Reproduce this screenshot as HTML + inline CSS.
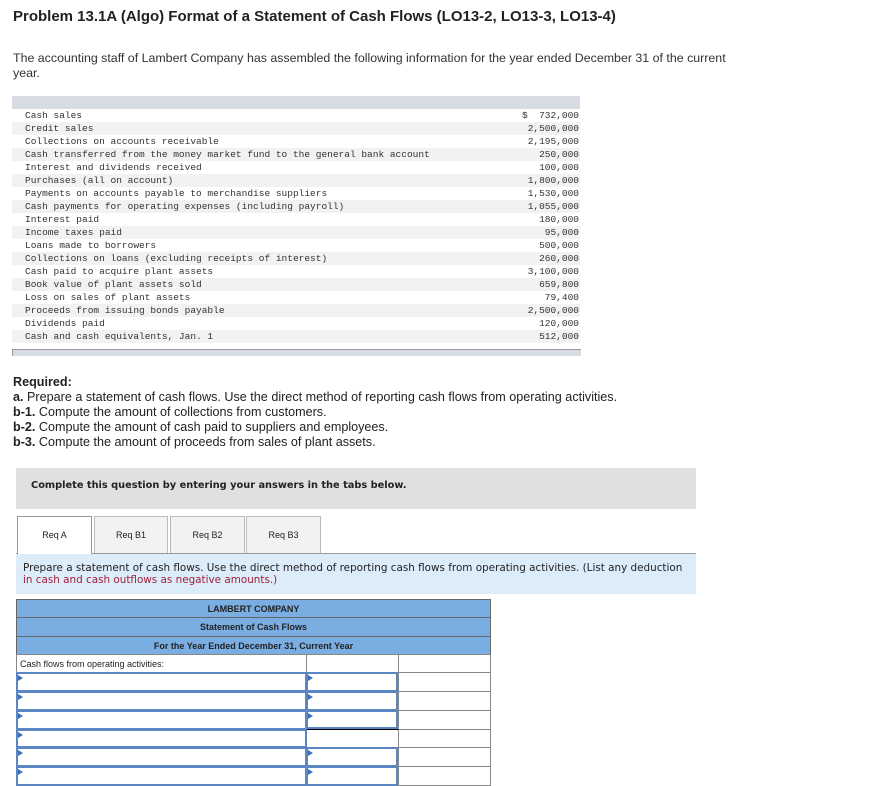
<!DOCTYPE html>
<html><head><style>
body{margin:0;width:873px;height:780px;overflow:hidden;background:#fff;font-family:"Liberation Sans",sans-serif;color:#222;position:relative}
.a{position:absolute}
.mono{font-family:"Liberation Mono","DejaVu Sans Mono",monospace;font-size:9.5px;color:#333}
.row{position:absolute;left:12px;width:568px;height:13px;line-height:14px}
.row span{position:absolute;left:13px}
.row b{position:absolute;right:1px;font-weight:normal}
.tab{position:absolute;top:516px;height:37px;border:1px solid #bbb;border-bottom:none;background:#f2f2f2;font-size:9px;text-align:center;line-height:37px;box-sizing:border-box}
.hd{position:absolute;left:16px;width:475px;background:#7aaee3;border:1px solid #666;box-sizing:border-box;font-size:9px;font-weight:bold;text-align:center;color:#222}
.c{position:absolute;border:1px solid #888;box-sizing:border-box;background:#fff}
.in{position:absolute;border:2px solid #5b86c2;box-sizing:border-box;background:#fff}
.in:before{content:"";position:absolute;left:0;top:1px;border-left:5px solid #3a6fb5;border-top:3px solid transparent;border-bottom:3px solid transparent}
</style></head><body>
<div class="a" style="left:13px;top:8px;font-size:15px;font-weight:bold;color:#222">Problem 13.1A (Algo) Format of a Statement of Cash Flows (LO13-2, LO13-3, LO13-4)</div>
<div class="a" style="left:13px;top:51px;width:735px;font-size:12.4px;line-height:15px;color:#333">The accounting staff of Lambert Company has assembled the following information for the year ended December 31 of the current year.</div>
<div class="a" style="left:12px;top:96px;width:568px;height:13px;background:#d6dbe4"></div>
<div class="mono">
<div class="row" style="top:109px"><span>Cash sales</span><b>$ &nbsp;732,000</b></div>
<div class="row" style="top:122px;background:#f2f2f2"><span>Credit sales</span><b>2,500,000</b></div>
<div class="row" style="top:135px"><span>Collections on accounts receivable</span><b>2,195,000</b></div>
<div class="row" style="top:148px;background:#f2f2f2"><span>Cash transferred from the money market fund to the general bank account</span><b>250,000</b></div>
<div class="row" style="top:161px"><span>Interest and dividends received</span><b>100,000</b></div>
<div class="row" style="top:174px;background:#f2f2f2"><span>Purchases (all on account)</span><b>1,800,000</b></div>
<div class="row" style="top:187px"><span>Payments on accounts payable to merchandise suppliers</span><b>1,530,000</b></div>
<div class="row" style="top:200px;background:#f2f2f2"><span>Cash payments for operating expenses (including payroll)</span><b>1,055,000</b></div>
<div class="row" style="top:213px"><span>Interest paid</span><b>180,000</b></div>
<div class="row" style="top:226px;background:#f2f2f2"><span>Income taxes paid</span><b>95,000</b></div>
<div class="row" style="top:239px"><span>Loans made to borrowers</span><b>500,000</b></div>
<div class="row" style="top:252px;background:#f2f2f2"><span>Collections on loans (excluding receipts of interest)</span><b>260,000</b></div>
<div class="row" style="top:265px"><span>Cash paid to acquire plant assets</span><b>3,100,000</b></div>
<div class="row" style="top:278px;background:#f2f2f2"><span>Book value of plant assets sold</span><b>659,800</b></div>
<div class="row" style="top:291px"><span>Loss on sales of plant assets</span><b>79,400</b></div>
<div class="row" style="top:304px;background:#f2f2f2"><span>Proceeds from issuing bonds payable</span><b>2,500,000</b></div>
<div class="row" style="top:317px"><span>Dividends paid</span><b>120,000</b></div>
<div class="row" style="top:330px;background:#f2f2f2"><span>Cash and cash equivalents, Jan. 1</span><b>512,000</b></div>
</div>
<div class="a" style="left:12px;top:349px;width:568px;height:6px;background:#d6dbe4;border-top:1px solid #999;border-left:1px solid #999"></div>
<div class="a" style="left:13px;top:375px;font-size:12.6px;line-height:15px;color:#222">
<b>Required:</b><br><b>a.</b> Prepare a statement of cash flows. Use the direct method of reporting cash flows from operating activities.<br><b>b-1.</b> Compute the amount of collections from customers.<br><b>b-2.</b> Compute the amount of cash paid to suppliers and employees.<br><b>b-3.</b> Compute the amount of proceeds from sales of plant assets.</div>
<div class="a" style="left:16px;top:468px;width:680px;height:41px;background:#e0e0e0"></div>
<div class="a" style="left:31px;top:480px;font-family:'DejaVu Sans',sans-serif;font-size:9.8px;font-weight:bold;color:#222">Complete this question by entering your answers in the tabs below.</div>
<div class="a" style="left:16px;top:553px;width:680px;height:1px;background:#999"></div>
<div class="tab" style="left:17px;width:75px;background:#fff;height:38px;border-color:#999">Req A</div>
<div class="tab" style="left:94px;width:74px">Req B1</div>
<div class="tab" style="left:170px;width:75px">Req B2</div>
<div class="tab" style="left:246px;width:75px">Req B3</div>
<div class="a" style="left:16px;top:554px;width:680px;height:40px;background:#dcecf9"></div>
<div class="a" style="left:23px;top:562px;width:670px;font-family:'DejaVu Sans',sans-serif;font-size:10.4px;line-height:12px;color:#222">Prepare a statement of cash flows. Use the direct method of reporting cash flows from operating activities. (List any deduction <span style="color:#a0203a">in cash and cash outflows as negative amounts.)</span></div>
<div class="hd" style="top:599px;height:19px;line-height:18px">LAMBERT COMPANY</div>
<div class="hd" style="top:617px;height:20px;line-height:19px">Statement of Cash Flows</div>
<div class="hd" style="top:636px;height:19px;line-height:18px">For the Year Ended December 31, Current Year</div>
<div class="c" style="left:16px;top:654px;width:291px;height:19px;font-size:9px;line-height:18px;padding-left:3px">Cash flows from operating activities:</div>
<div class="c" style="left:306px;top:654px;width:93px;height:19px"></div>
<div class="c" style="left:398px;top:654px;width:93px;height:19px"></div>
<div class="c" style="left:398px;top:672px;width:93px;height:20px"></div><div class="c" style="left:398px;top:691px;width:93px;height:20px"></div><div class="c" style="left:398px;top:710px;width:93px;height:20px"></div><div class="c" style="left:398px;top:729px;width:93px;height:19px"></div><div class="c" style="left:398px;top:747px;width:93px;height:20px"></div><div class="c" style="left:398px;top:766px;width:93px;height:20px"></div>
<div class="c" style="left:306px;top:729px;width:93px;height:19px;border-top:1px solid #000"></div>
<div class="in" style="left:16px;top:672px;width:291px;height:20px"></div><div class="in" style="left:306px;top:672px;width:92px;height:20px"></div>
<div class="in" style="left:16px;top:691px;width:291px;height:20px"></div><div class="in" style="left:306px;top:691px;width:92px;height:20px"></div>
<div class="in" style="left:16px;top:710px;width:291px;height:20px"></div><div class="in" style="left:306px;top:710px;width:92px;height:19px"></div>
<div class="in" style="left:16px;top:729px;width:291px;height:19px"></div>
<div class="in" style="left:16px;top:747px;width:291px;height:20px"></div><div class="in" style="left:306px;top:747px;width:92px;height:20px"></div>
<div class="in" style="left:16px;top:766px;width:291px;height:20px"></div><div class="in" style="left:306px;top:766px;width:92px;height:20px"></div>
</body></html>
